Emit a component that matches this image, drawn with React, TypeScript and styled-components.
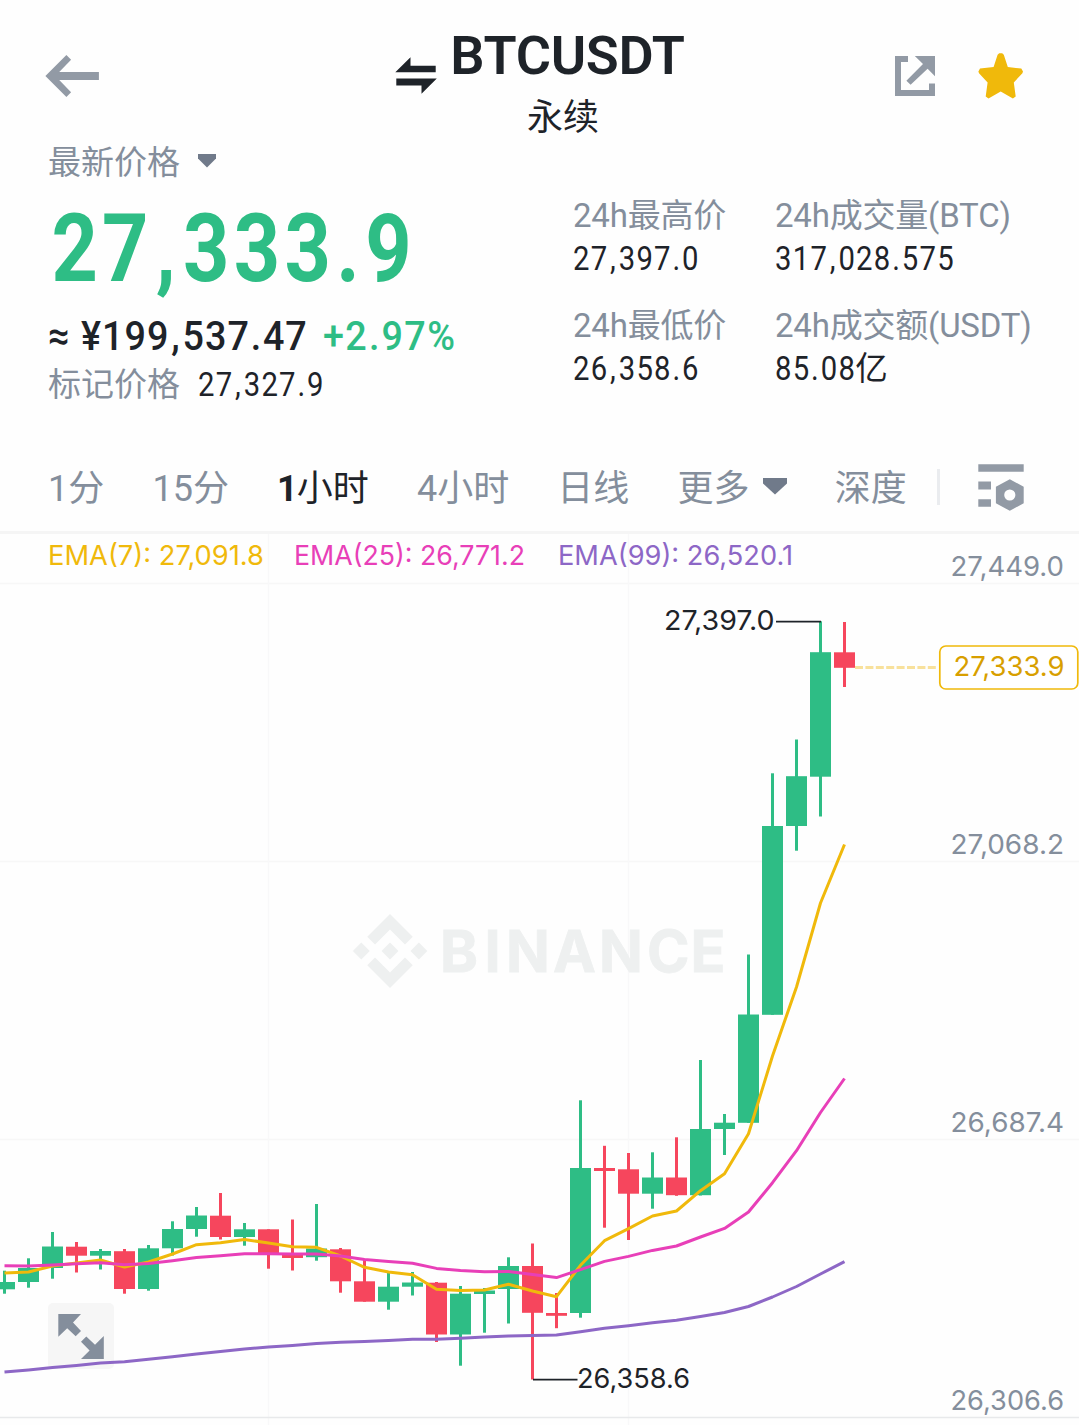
import React from "react";
import styled, { createGlobalStyle } from "styled-components";

const color = {
  ink: "#1e2329",
  muted: "#848e9c",
  icon: "#929aa5",
  caret: "#707a8a",
  up: "#2ebd85",
  down: "#f6465d",
  gold: "#f0b90b",
  pink: "#e83fb8",
  violet: "#8d67c6",
};

const GlobalStyle = createGlobalStyle`
  body {
    margin: 0;
    background: #fff;
  }
  * {
    box-sizing: border-box;
  }
`;

const Page = styled.div`
  width: 1079px;
  height: 1425px;
  overflow: hidden;
  display: flex;
  flex-direction: column;
  background: #fefefe;
  color: ${color.ink};
  font-family: Roboto, "Noto Sans CJK SC", sans-serif;
`;

const Header = styled.header`
  height: 140px;
  flex: none;
  display: flex;
  align-items: flex-start;
  justify-content: space-between;
  padding: 28px 56px 0 45px;
`;

const HeaderSide = styled.div<{ $end?: boolean }>`
  width: 240px;
  height: 71px;
  padding-top: 25px;
  display: flex;
  align-items: center;
  gap: 43px;
  justify-content: ${(p) => (p.$end ? "flex-end" : "flex-start")};
`;

const TitleBlock = styled.div`
  padding-left: 12px;
  display: flex;
  flex-direction: column;
  align-items: center;
`;

const TitleRow = styled.div`
  display: flex;
  align-items: flex-start;
  gap: 13px;
  height: 55px;
  svg {
    margin-top: 29px;
  }
`;

const Symbol = styled.h1`
  margin: 0;
  font-size: 54px;
  line-height: 56px;
  font-weight: 600;
  letter-spacing: -0.3px;
`;

const Contract = styled.div`
  padding-left: 46px;
  font-size: 36px;
  line-height: 70px;
`;

const Summary = styled.section`
  height: 305px;
  flex: none;
  display: flex;
  padding-left: 48px;
`;

const PriceColumn = styled.div`
  width: 525px;
  padding-top: 1px;
  display: flex;
  flex-direction: column;
`;

const Line = styled.div<{ $h: number; $gap?: number }>`
  height: ${(p) => p.$h}px;
  line-height: ${(p) => p.$h}px;
  display: flex;
  align-items: center;
  gap: ${(p) => p.$gap ?? 0}px;
  white-space: nowrap;
`;

const Label = styled.span<{ $tight?: boolean }>`
  font-size: 33px;
  letter-spacing: ${(p) => (p.$tight ? "-0.2px" : "0")};
  color: ${color.muted};
`;

const Condensed = styled.span`
  display: inline-block;
  transform-origin: left center;
`;

const Separator = styled.span<{ $space: number }>`
  margin: 0 ${(p) => p.$space}em;
`;

const Value = styled(Condensed)`
  font-size: 32.5px;
  letter-spacing: 1.45px;
  transform: scaleX(0.9);
`;

const Unit = styled.span`
  margin-left: -10px;
  font-size: 32.5px;
`;

const LastPrice = styled(Condensed)`
  padding: 2px 0 0 4px;
  font-size: 94px;
  font-weight: 700;
  color: ${color.up};
  letter-spacing: 5px;
  transform: scaleX(0.86);
`;

const Fiat = styled(Condensed)<{ $up?: boolean }>`
  width: ${(p) => (p.$up ? "150px" : "275px")};
  font-size: 41px;
  font-weight: 500;
  letter-spacing: ${(p) => (p.$up ? "1.5px" : "1.1px")};
  transform: scaleX(0.92);
  color: ${(p) => (p.$up ? color.up : color.ink)};
`;

const StatsGrid = styled.div`
  padding-top: 54px;
  display: grid;
  grid-template-columns: 202px auto;
  grid-auto-rows: 87px;
  row-gap: 23px;
`;

const Stat = styled.div`
  display: flex;
  flex-direction: column;
`;

const Tabs = styled.nav`
  height: 89px;
  flex: none;
  display: flex;
  align-items: center;
  padding: 0 0 0 48px;
  border-bottom: 3px solid #f5f5f5;
`;

const Tab = styled.span<{ $active?: boolean }>`
  margin-right: 48.2px;
  padding-top: 3px;
  display: flex;
  align-items: center;
  gap: 13px;
  font-size: 36px;
  line-height: 83px;
  white-space: nowrap;
  color: ${(p) => (p.$active ? color.ink : color.muted)};
`;

const TabText = styled.span`
  b {
    font-weight: 700;
    letter-spacing: -1px;
  }
`;

const Divider = styled.i`
  width: 3px;
  height: 36px;
  margin-bottom: 2px;
  margin-left: -18px;
  margin-right: 38px;
  background: #eaecef;
`;

const Chart = styled.svg`
  display: block;
  flex: none;
`;

const ChartText = styled.text`
  font-family: Inter, sans-serif;
  font-size: 27.5px;
`;

const Watermark = styled.text`
  font-family: Inter, sans-serif;
  font-weight: 700;
  font-size: 57.5px;
`;

const CaretSvg = styled.svg<{ $raise: number }>`
  margin-bottom: ${(p) => p.$raise}px;
`;

// [direction, wick top, wick bottom, body top, body bottom]
type Candle = [0 | 1, number, number, number, number];

const candles: Candle[] = [
  [1, 1270.7, 1293.7, 1282, 1289.3],
  [1, 1258.3, 1287.7, 1268, 1282],
  [1, 1232, 1278.7, 1246.5, 1268],
  [0, 1242, 1272.5, 1246.7, 1255.7],
  [1, 1249, 1269.5, 1251, 1255.7],
  [0, 1249, 1293.7, 1251.2, 1289],
  [1, 1245, 1290.7, 1248.3, 1289],
  [1, 1221.3, 1255.5, 1229, 1248.3],
  [1, 1207, 1236.7, 1215.5, 1229],
  [0, 1193, 1239.5, 1215.7, 1237],
  [1, 1223, 1245.7, 1229.3, 1237],
  [0, 1229.3, 1268.7, 1229.3, 1254],
  [0, 1219.5, 1270.5, 1254.5, 1258],
  [1, 1204, 1260.7, 1248.5, 1257.2],
  [0, 1248, 1292.7, 1249.3, 1281.3],
  [0, 1259, 1301.7, 1281.3, 1301.7],
  [1, 1272, 1309.7, 1286.7, 1301.7],
  [1, 1272, 1295.5, 1282.5, 1286.7],
  [0, 1282, 1342, 1282.7, 1334.5],
  [1, 1286, 1365.7, 1293.7, 1334.5],
  [1, 1288, 1332.7, 1290.5, 1294],
  [1, 1257.3, 1323.5, 1266, 1289],
  [0, 1243.5, 1379.5, 1266, 1312.8],
  [0, 1293, 1328.2, 1313, 1315.8],
  [1, 1100.3, 1317.7, 1168, 1313],
  [0, 1145.8, 1227.7, 1168, 1171],
  [0, 1153, 1240, 1169.3, 1193.7],
  [1, 1152.3, 1208.7, 1177.5, 1193.7],
  [0, 1137.3, 1195.8, 1177.5, 1195.2],
  [1, 1060, 1195.5, 1129, 1195.2],
  [1, 1114, 1155, 1122.7, 1129],
  [1, 954.5, 1122.8, 1014.5, 1122.8],
  [1, 773.3, 1014.8, 826, 1014.8],
  [1, 739.5, 850.7, 776.2, 826],
  [1, 621.3, 816.5, 652.2, 776.7],
  [0, 622, 687, 652.3, 667.8],
];

const ema7 = [
  1273, 1272, 1266, 1263, 1260, 1267, 1262, 1254, 1244.7, 1242.7, 1239.5, 1243, 1246.7, 1247.3,
  1256, 1267.3, 1272, 1274.7, 1289.3, 1290.4, 1290, 1284.3, 1291, 1296.7, 1265.3, 1240.7, 1228.7,
  1216, 1211, 1190.7, 1173.7, 1133.7, 1056, 987, 903, 844.5,
];

const ema25 = [
  1265.8, 1266, 1265, 1263.7, 1262.8, 1264.7, 1263.5, 1260.7, 1257.4, 1255.8, 1253.8, 1253.8, 1254,
  1254, 1256, 1259.4, 1261.4, 1263.3, 1268.4, 1270.4, 1271.8, 1271.4, 1274.4, 1277.6, 1269.6,
  1261.4, 1256.4, 1250.4, 1246, 1237, 1228.4, 1212, 1182.7, 1150.7, 1112.5, 1078.5,
];

const ema99 = [
  1372, 1370, 1367.6, 1365.4, 1363, 1361.7, 1359.3, 1356.7, 1354, 1351.4, 1349, 1347, 1345.4,
  1343.4, 1342.3, 1341.4, 1340.4, 1339.3, 1339.2, 1338.3, 1337, 1336, 1335.5, 1335, 1331.7, 1328.3,
  1325.7, 1322.7, 1320.2, 1316.5, 1312.5, 1306.5, 1297, 1286.5, 1274, 1261.7,
];

const centerX = (i: number) => 4.5 + 24 * i;
const toPoints = (ys: number[]) => ys.map((y, i) => `${centerX(i)},${y}`).join(" ");

const legend = [
  { x: 48, width: 216, text: "EMA(7): 27,091.8", fill: color.gold },
  { x: 294, width: 231, text: "EMA(25): 26,771.2", fill: color.pink },
  { x: 558, width: 235, text: "EMA(99): 26,520.1", fill: color.violet },
];

const axis = [
  { y: 576, text: "27,449.0" },
  { y: 854, text: "27,068.2" },
  { y: 1132, text: "26,687.4" },
  { y: 1410, text: "26,306.6" },
];

const watermarkX = [440, 484.5, 506, 553, 599, 647, 690.5];

function BackIcon() {
  return (
    <svg width="54" height="42" viewBox="45 55 54 42" fill={color.icon}>
      <path d="M45.4 76 66.4 55l4.7 4.7L59.2 72h39.7v8H59.2l11.9 12.3-4.7 4.7z" />
    </svg>
  );
}

function SwapIcon() {
  return (
    <svg width="42" height="37" viewBox="395 57.5 42 37" fill={color.ink}>
      <path d="M395.3 72.8 410.5 57.7v8.5h25.2v6.6z" />
      <path d="M396.3 79h40.5l-15.3 15.2V86h-25.2z" />
    </svg>
  );
}

function ShareIcon() {
  return (
    <svg width="40" height="40" viewBox="895 56 40 40" fill={color.icon}>
      <path d="M895 56h13v6h-7v28h28v-6.5h6V96h-40z" />
      <path d="M914.8 56H935v20.3l-7.4-7.6-17 16-4.2-4 16.6-16.6z" />
    </svg>
  );
}

function StarIcon() {
  return (
    <svg width="45" height="46" viewBox="978 53 45 46" fill={color.gold}>
      <path d="M999.2 53.2h3L1003.8 54.8 1007.8 66.9 1021.3 68.6 1023 71.6 1022.4 73.2 1013.8 82.4 1015.7 96.6 1012.9 98.4 1000.7 91.6 988.5 98.4 985.7 96.6 987.6 82.4 979 73.2 978.4 71.6 980 68.6 993.6 66.9 997.6 54.8z" />
    </svg>
  );
}

function Caret({ width, height, raise }: { width: number; height: number; raise: number }) {
  return (
    <CaretSvg
      $raise={raise}
      width={width}
      height={height}
      viewBox="0 0 24 17"
      preserveAspectRatio="none"
      fill={color.caret}
    >
      <path d="M0 0h24v5.6L12 17 0 5.6z" />
    </CaretSvg>
  );
}

function IndicatorIcon() {
  return (
    <svg width="46" height="49" viewBox="979 463.6 46 49" fill={color.icon}>
      <path d="M979.3 463.8h45.4v7.6h-45.4zM979.3 481h12.7v8h-12.7zM979.3 498.8h12.7v7.6h-12.7z" />
      <path
        fillRule="evenodd"
        d="M1010.8 478.8l13.9 7.6v16.4l-13.9 7.6-13.9-7.6v-16.4zM1010.8 489a5.6 5.6 0 1 0 0 11.2 5.6 5.6 0 0 0 0-11.2z"
      />
    </svg>
  );
}

function Digits({ text, space }: { text: string; space: number }) {
  return (
    <>
      {text.split(/([,.])/).map((part, i) =>
        part === "," || part === "." ? (
          <Separator key={i} $space={part === "," ? space / 2 : space / 5}>
            {part}
          </Separator>
        ) : (
          part
        )
      )}
    </>
  );
}

function PriceChart() {
  return (
    <Chart width="1079" height="891" viewBox="0 534 1079 891">
      {[583.5, 861.5, 1139.5].map((y) => (
        <line key={y} x1="0" x2="1079" y1={y} y2={y} stroke="#f7f7f7" strokeWidth="1.4" />
      ))}
      {[268.5, 628.5].map((x) => (
        <line key={x} x1={x} x2={x} y1="534" y2="1425" stroke="#f8f8f9" strokeWidth="1.4" />
      ))}
      <line x1="0" x2="1079" y1="1417.5" y2="1417.5" stroke="#e8e9eb" strokeWidth="1.4" />

      <g fill="#eef0f0">
        <path d="M390 914l22.7 22.7-7.7 7.7-15-15-15 15-7.7-7.7z" />
        <path d="M390 988l22.7-22.7-7.7-7.7-15 15-15-15-7.7 7.7z" />
        <path d="M361.3 942.6l8.4 8.4-8.4 8.4-8.4-8.4zM390 942.6l8.4 8.4-8.4 8.4-8.4-8.4zM418.9 942.6l8.4 8.4-8.4 8.4-8.4-8.4z" />
        <Watermark x={watermarkX.join(" ")} y="971.5" stroke="#eef0f0" strokeWidth="0.8">
          BINANCE
        </Watermark>
      </g>

      <rect x="48" y="1303" width="66" height="66" rx="5" fill="#f6f6f6" />
      <path
        fill={color.muted}
        d="M58.3 1314H81l-8 8.5 8 8.5-5.3 5.3-8.5-8-8.9 8.5zM103.8 1359H81l8.6-8.5-8.6-8.7 5.3-5.3 8.7 8.3 8.8-8.8z"
      />

      {candles.map(([up, high, low, top, bottom], i) => {
        const x = centerX(i);
        return (
          <g key={i} fill={up ? color.up : color.down}>
            <rect x={x - 1.5} y={high} width="3" height={low - high} />
            <rect x={x - 10.5} y={top} width="21" height={bottom - top} />
          </g>
        );
      })}

      <g fill="none" strokeWidth="3" strokeLinejoin="round">
        <polyline points={toPoints(ema7)} stroke={color.gold} />
        <polyline points={toPoints(ema25)} stroke={color.pink} />
        <polyline points={toPoints(ema99)} stroke={color.violet} />
      </g>

      {legend.map((item) => (
        <ChartText
          key={item.text}
          x={item.x}
          y="565"
          fill={item.fill}
          textLength={item.width}
          lengthAdjust="spacingAndGlyphs"
        >
          {item.text}
        </ChartText>
      ))}

      {axis.map((item) => (
        <ChartText
          key={item.text}
          x="950.5"
          y={item.y}
          fill={color.muted}
          textLength="113.5"
          lengthAdjust="spacingAndGlyphs"
        >
          {item.text}
        </ChartText>
      ))}

      <g stroke={color.ink} strokeWidth="1.6">
        <line x1="776" x2="821" y1="621.6" y2="621.6" />
        <line x1="533" x2="577.5" y1="1379.6" y2="1379.6" />
      </g>
      <ChartText x="664" y="630" fill={color.ink} textLength="110.5" lengthAdjust="spacingAndGlyphs">
        27,397.0
      </ChartText>
      <ChartText x="577" y="1388" fill={color.ink} textLength="113" lengthAdjust="spacingAndGlyphs">
        26,358.6
      </ChartText>

      <line
        x1="855"
        x2="936"
        y1="667.6"
        y2="667.6"
        stroke="#f8e19c"
        strokeWidth="3"
        strokeDasharray="8 2.4"
      />
      <rect x="939.8" y="646" width="138" height="43" rx="6" fill="#fff" stroke={color.gold} strokeWidth="1.7" />
      <ChartText x="953.5" y="676" fill="#d89f00" textLength="111" lengthAdjust="spacingAndGlyphs">
        27,333.9
      </ChartText>
    </Chart>
  );
}

const stats = [
  { label: "24h最高价", value: "27,397.0" },
  { label: "24h成交量(BTC)", value: "317,028.575" },
  { label: "24h最低价", value: "26,358.6" },
  { label: "24h成交额(USDT)", value: "85.08", unit: "亿" },
];

export default function App() {
  return (
    <Page>
      <GlobalStyle />
      <Header>
        <HeaderSide>
          <BackIcon />
        </HeaderSide>
        <TitleBlock>
          <TitleRow>
            <SwapIcon />
            <Symbol>BTCUSDT</Symbol>
          </TitleRow>
          <Contract>永续</Contract>
        </TitleBlock>
        <HeaderSide $end>
          <ShareIcon />
          <StarIcon />
        </HeaderSide>
      </Header>

      <Summary>
        <PriceColumn>
          <Line $h={44} $gap={18}>
            <Label>最新价格</Label>
            <Caret width={18} height={13.5} raise={4} />
          </Line>
          <Line $h={127}>
            <LastPrice>
              <Digits text="27,333.9" space={0.075} />
            </LastPrice>
          </Line>
          <Line $h={49}>
            <Fiat>
              <Digits text="≈ ¥199,537.47" space={0.1} />
            </Fiat>
            <Fiat $up>
              <Digits text="+2.97%" space={0.1} />
            </Fiat>
          </Line>
          <Line $h={48} $gap={18}>
            <Label>标记价格</Label>
            <Value>
              <Digits text="27,327.9" space={0.105} />
            </Value>
          </Line>
        </PriceColumn>
        <StatsGrid>
          {stats.map((item) => (
            <Stat key={item.label}>
              <Line $h={44}>
                <Label $tight>{item.label}</Label>
              </Line>
              <Line $h={43}>
                <Value>
                  <Digits text={item.value} space={0.105} />
                </Value>
                {item.unit && <Unit>{item.unit}</Unit>}
              </Line>
            </Stat>
          ))}
        </StatsGrid>
      </Summary>

      <Tabs>
        <Tab>1分</Tab>
        <Tab>15分</Tab>
        <Tab $active>
          <TabText>
            <b>1</b>小时
          </TabText>
        </Tab>
        <Tab>4小时</Tab>
        <Tab>日线</Tab>
        <Tab>
          更多
          <Caret width={24} height={16.5} raise={6} />
        </Tab>
        <Tab>深度</Tab>
        <Divider />
        <IndicatorIcon />
      </Tabs>

      <PriceChart />
    </Page>
  );
}
